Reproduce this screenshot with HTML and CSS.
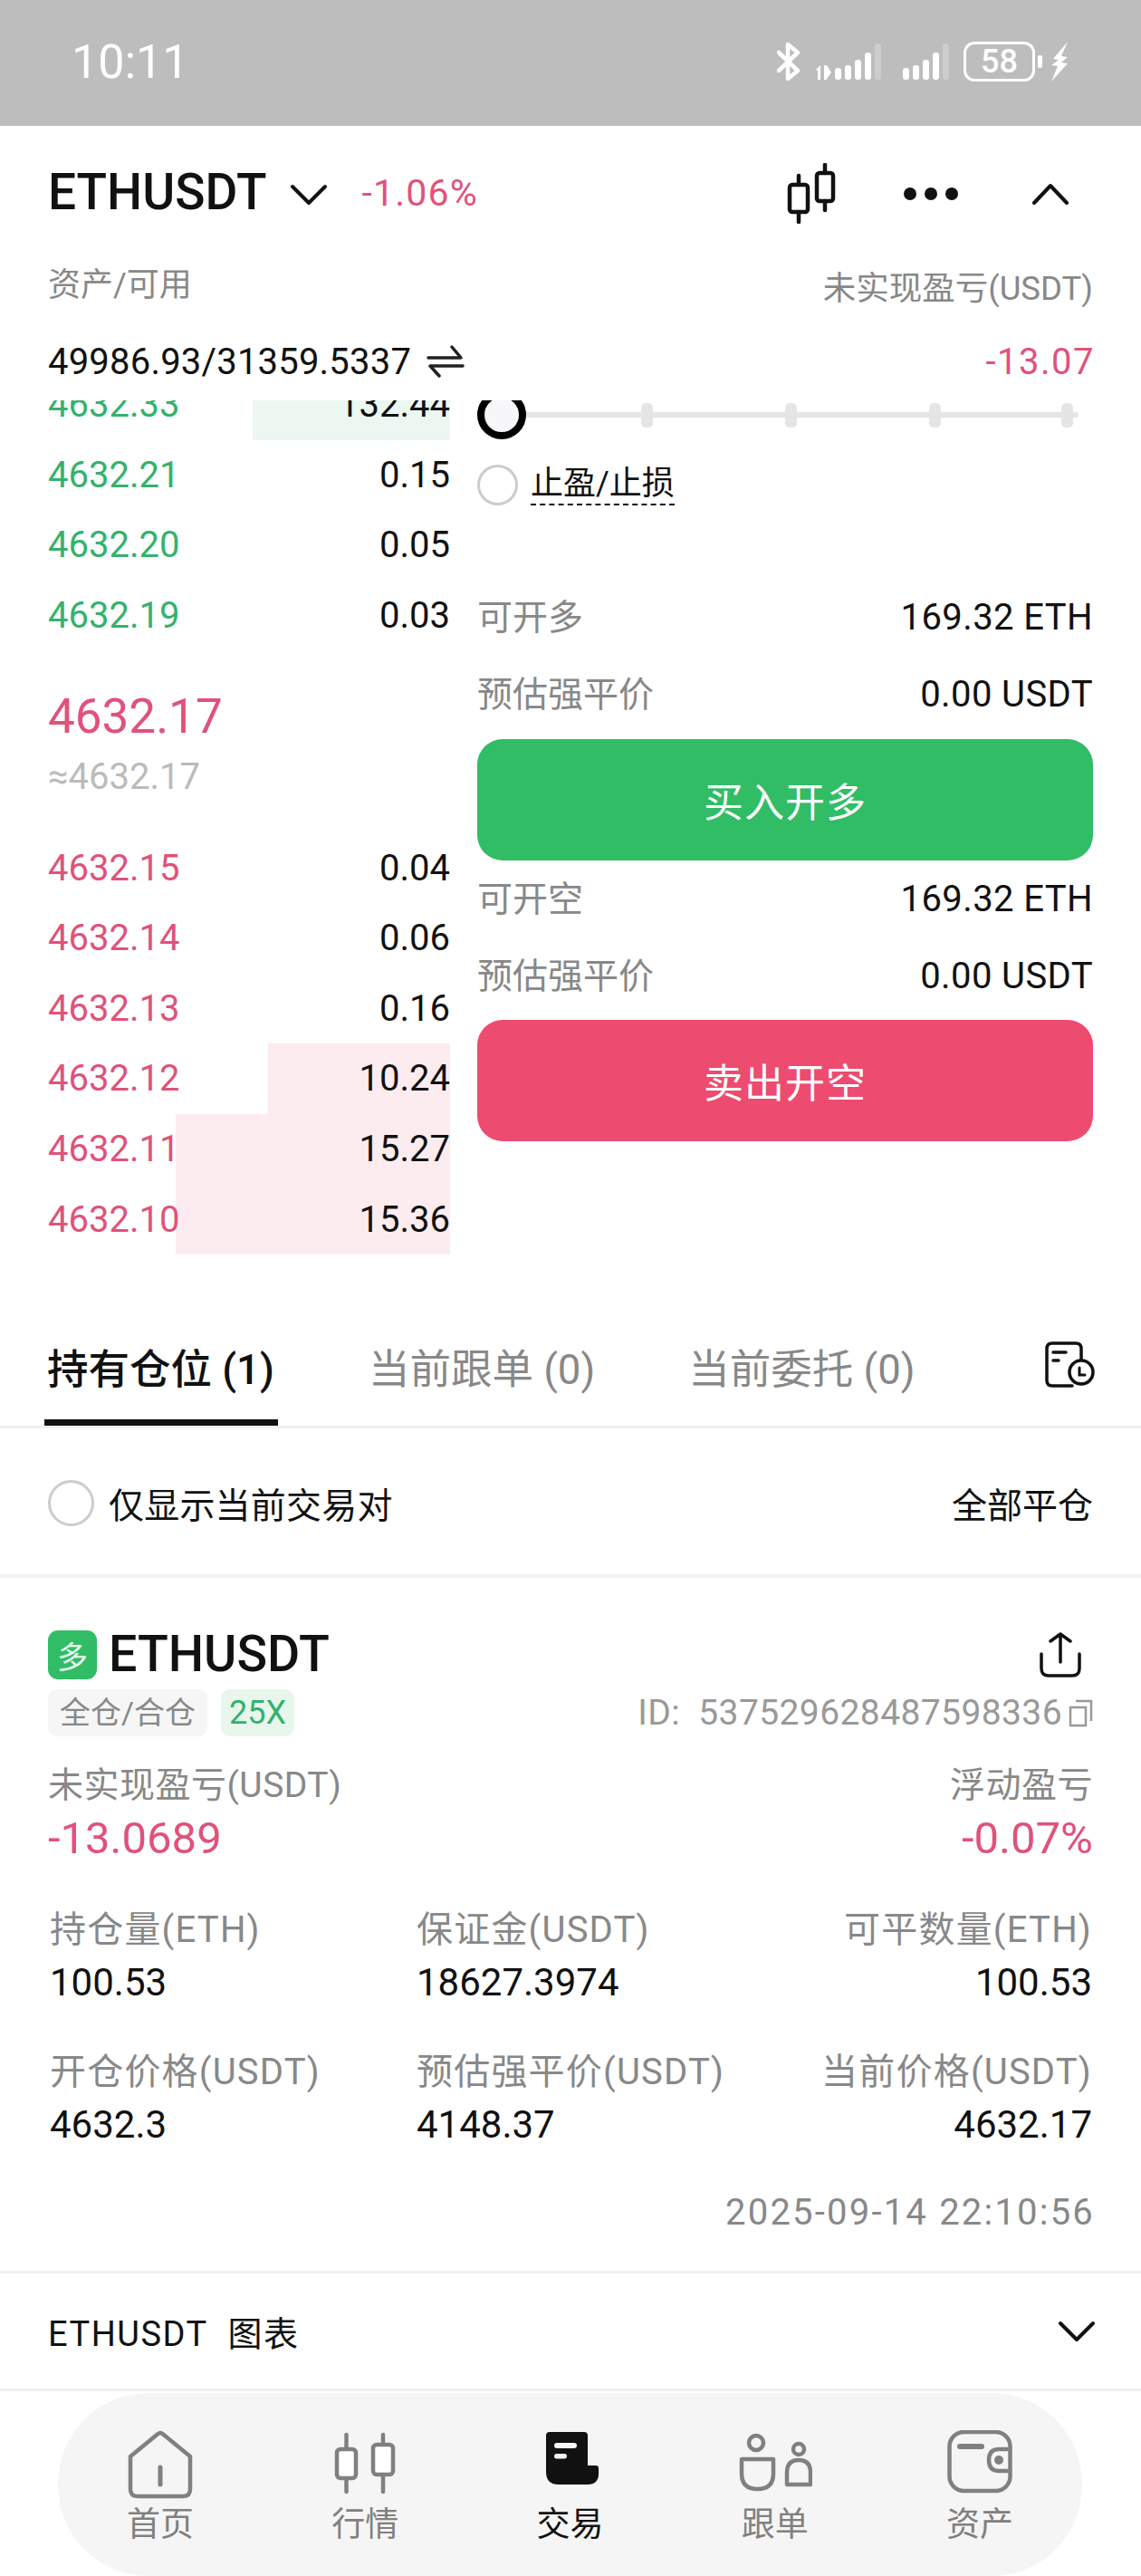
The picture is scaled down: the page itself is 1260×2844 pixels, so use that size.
FILE: index.html
```html
<!DOCTYPE html>
<html lang="zh">
<head>
<meta charset="utf-8">
<title>ETHUSDT</title>
<link rel="stylesheet" href="styles.css">
</head>
<body>
<div class="page">
  <div class="status">
    <span class="clock">10:11</span>
    <div class="status-icons">
      <svg class="ic-bt" viewBox="0 0 26 42"><path d="M2 11 L23 31 L12 40 V2 L23 11 L2 31" fill="none" stroke="#fff" stroke-width="4.500" stroke-linejoin="round" stroke-linecap="round"/></svg>
      <svg class="ic-sig1" viewBox="0 0 73 42"><g fill="#fff"><path d="M1 30 L6 25 V41 H3 V31 Z"/><path d="M10 25 H13 L18 33 L13 40 V41 H10 Z"/><rect x="22" y="28" width="7" height="13" rx="3"/><rect x="33" y="25" width="7" height="16" rx="3"/><rect x="44" y="19" width="7" height="22" rx="3"/><rect x="55" y="11" width="7" height="30" rx="3"/></g><rect x="66" y="1" width="7" height="40" rx="3" fill="#fff" opacity=".25"/></svg>
      <svg class="ic-sig2" viewBox="0 0 51 42"><g fill="#fff"><rect x="0" y="28" width="7" height="13" rx="3"/><rect x="11" y="25" width="7" height="16" rx="3"/><rect x="22" y="19" width="7" height="22" rx="3"/><rect x="33" y="11" width="7" height="30" rx="3"/></g><rect x="44" y="1" width="7" height="40" rx="3" fill="#fff" opacity=".25"/></svg>
      <div class="battery"><span>58</span></div>
      <i class="bat-tip"></i>
      <svg class="ic-bolt" viewBox="0 0 20 44"><path d="M19 0 L3 19 L9 20 L1 26 L8 27 L1 44 L19 24 L12 23 L19 17 L12 16 Z" fill="#fff"/></svg>
    </div>
  </div>

  <header class="head">
    <h1 class="pair">ETHUSDT</h1>
    <svg class="chev" viewBox="0 0 40 24"><path d="M2 3 L20 21 L38 3" fill="none" stroke="#111" stroke-width="4" stroke-linecap="round" stroke-linejoin="round"/></svg>
    <span class="change">-1.06%</span>
    <div class="head-tools">
      <svg class="ic-candle" viewBox="0 0 54 67"><g fill="none" stroke="#111" stroke-width="4.500" stroke-linecap="round" stroke-linejoin="round"><rect x="3" y="24" width="20" height="30" rx="3"/><path d="M13 14 V24 M13 54 V65"/><rect x="33" y="11" width="18" height="31" rx="3"/><path d="M42 2 V11 M42 42 V52"/></g></svg>
      <div class="dots"><i></i><i></i><i></i></div>
      <svg class="ic-up" viewBox="0 0 40 24"><path d="M2 22 L20 3 L38 22" fill="none" stroke="#111" stroke-width="4" stroke-linecap="round" stroke-linejoin="round"/></svg>
    </div>
  </header>

  <div class="assets">
    <div class="asset-labels"><span class="lbl-a">资产/可用</span><span class="lbl-b">未实现盈亏(USDT)</span></div>
    <div class="asset-vals">
      <span class="bal">49986.93/31359.5337</span>
      <svg class="ic-swap" viewBox="0 0 42 36"><path d="M2 14 H38 L28 2 M40 23 H4 L14 34" fill="none" stroke="#222" stroke-width="3.500" stroke-linecap="round" stroke-linejoin="round"/></svg>
      <span class="upl">-13.07</span>
    </div>
  </div>

  <section class="trade">
    <div class="book">
      <div class="book-scroll">
        <div class="row buy"><span class="fill w-buy"></span><span class="p">4632.33</span><span class="q">132.44</span></div>
        <div class="row buy"><span class="p">4632.21</span><span class="q">0.15</span></div>
        <div class="row buy"><span class="p">4632.20</span><span class="q">0.05</span></div>
        <div class="row buy"><span class="p">4632.19</span><span class="q">0.03</span></div>
        <div class="mid">
          <div class="mid-price">4632.17</div>
          <div class="mid-ref">≈4632.17</div>
        </div>
        <div class="row sell"><span class="p">4632.15</span><span class="q">0.04</span></div>
        <div class="row sell"><span class="p">4632.14</span><span class="q">0.06</span></div>
        <div class="row sell"><span class="p">4632.13</span><span class="q">0.16</span></div>
        <div class="row sell"><span class="fill w1"></span><span class="p">4632.12</span><span class="q">10.24</span></div>
        <div class="row sell"><span class="fill w2"></span><span class="p">4632.11</span><span class="q">15.27</span></div>
        <div class="row sell"><span class="fill w2"></span><span class="p">4632.10</span><span class="q">15.36</span></div>
      </div>
    </div>
    <div class="form">
      <div class="slider">
        <span class="thumb"></span><span class="tick t1"></span><span class="tick t2"></span><span class="tick t3"></span><span class="tick t4"></span>
      </div>
      <div class="tpsl"><span class="radio small"></span><span class="tpsl-text">止盈/止损</span></div>
      <div class="kv first"><span>可开多</span><b>169.32 ETH</b></div>
      <div class="kv"><span>预估强平价</span><b>0.00 USDT</b></div>
      <button class="btn long">买入开多</button>
      <div class="kv after-btn"><span>可开空</span><b>169.32 ETH</b></div>
      <div class="kv"><span>预估强平价</span><b>0.00 USDT</b></div>
      <button class="btn short">卖出开空</button>
    </div>
  </section>

  <nav class="tabs">
    <span class="tab active">持有仓位 (1)</span>
    <span class="tab t-two">当前跟单 (0)</span>
    <span class="tab t-three">当前委托 (0)</span>
    <svg class="ic-hist" viewBox="0 0 56 51"><path d="M31 49 H9 Q3 49 3 43 V8 Q3 2 9 2 H35 Q41 2 41 8 V20" fill="none" stroke="#111" stroke-width="3.500" stroke-linecap="round"/><path d="M10 12 H24 M10 21 H16" stroke="#111" stroke-width="3.500" stroke-linecap="round"/><circle cx="41" cy="34" r="13" fill="#fff" stroke="#111" stroke-width="3.500"/><path d="M39 29 V37 H45" fill="none" stroke="#111" stroke-width="3" stroke-linecap="round"/></svg>
  </nav>

  <div class="filter">
    <span class="radio"></span>
    <span class="filter-text">仅显示当前交易对</span>
    <span class="close-all">全部平仓</span>
  </div>

  <article class="card">
    <div class="card-top">
      <div class="card-title"><span class="side">多</span><span class="card-pair">ETHUSDT</span></div>
      <svg class="ic-share" viewBox="0 0 46 50"><path d="M2 24 V40 Q2 48 10 48 H36 Q44 48 44 40 V24 M23 33 V2 M12 10 L23 2 L34 10" fill="none" stroke="#111" stroke-width="3.500" stroke-linecap="round" stroke-linejoin="round"/></svg>
    </div>
    <div class="card-tags">
      <span class="tag">全仓/合仓</span>
      <span class="tag lev">25X</span>
      <span class="order-id">ID:&nbsp;&nbsp;537529628487598336</span>
      <svg class="ic-copy" viewBox="0 0 28 31"><path d="M9 2 H26 V24 M3 9 H20 V29 H3 Z" fill="none" stroke="#999" stroke-width="2.500"/></svg>
    </div>
    <div class="pnl">
      <div class="cell"><span class="k">未实现盈亏(USDT)</span><span class="v-red">-13.0689</span></div>
      <div class="cell right"><span class="k">浮动盈亏</span><span class="v-red">-0.07%</span></div>
    </div>
    <div class="grid">
      <div class="cell"><span class="k">持仓量(ETH)</span><span class="v">100.53</span></div>
      <div class="cell"><span class="k">保证金(USDT)</span><span class="v">18627.3974</span></div>
      <div class="cell right"><span class="k">可平数量(ETH)</span><span class="v">100.53</span></div>
      <div class="cell"><span class="k">开仓价格(USDT)</span><span class="v">4632.3</span></div>
      <div class="cell"><span class="k">预估强平价(USDT)</span><span class="v">4148.37</span></div>
      <div class="cell right"><span class="k">当前价格(USDT)</span><span class="v">4632.17</span></div>
    </div>
    <div class="stamp">2025-09-14 22:10:56</div>
  </article>

  <div class="chart-row">
    <span>ETHUSDT&nbsp;&nbsp;图表</span>
    <svg class="chev-sm" viewBox="0 0 40 24"><path d="M2 3 L20 21 L38 3" fill="none" stroke="#111" stroke-width="4" stroke-linecap="round" stroke-linejoin="round"/></svg>
  </div>

  <footer class="nav">
    <a class="nav-item">
      <svg viewBox="0 0 72 76"><path d="M3 29 L33.500 4 Q36 2 38.500 4 L69 29 V65 Q69 73 61 73 H11 Q3 73 3 65 Z" fill="none" stroke="#808080" stroke-width="4.500" stroke-linejoin="round"/><path d="M36 41 V60" stroke="#808080" stroke-width="5" stroke-linecap="round"/></svg>
      <span>首页</span>
    </a>
    <a class="nav-item">
      <svg viewBox="0 0 72 76"><g fill="#fff" stroke="#808080" stroke-width="4.500" stroke-linecap="round" stroke-linejoin="round"><rect x="5" y="21" width="21" height="32" rx="4"/><path d="M15.500 5 V21 M15.500 53 V68"/><rect x="45" y="16" width="22" height="33" rx="4"/><path d="M56 5 V16 M56 49 V68"/></g></svg>
      <span>行情</span>
    </a>
    <a class="nav-item on">
      <svg viewBox="0 0 72 76"><path d="M14 2 H52 Q56 2 56 6 V39 H65 Q68 39 68 42 V48 Q68 60 56 60 H24 Q10 60 10 46 V6 Q10 2 14 2 Z" fill="#111"/><rect x="19" y="14" width="25" height="6" rx="3" fill="#f5f5f5"/><rect x="19" y="26" width="14" height="5.500" rx="2.700" fill="#f5f5f5"/></svg>
      <span>交易</span>
    </a>
    <a class="nav-item">
      <svg viewBox="0 0 82 76"><g fill="none" stroke="#808080" stroke-width="4.500" stroke-linecap="round" stroke-linejoin="round"><circle cx="20" cy="14" r="8"/><path d="M4 32 H39 V48 Q39 65 21.500 65 Q4 65 4 48 Z"/><circle cx="67" cy="21" r="6"/><path d="M54 60 V47 Q54 33 67 33 Q80 33 80 47 V60 Z"/></g></svg>
      <span>跟单</span>
    </a>
    <a class="nav-item">
      <svg viewBox="0 0 72 76"><rect x="2.500" y="2" width="67" height="65" rx="16" fill="none" stroke="#808080" stroke-width="4.500"/><path d="M14 18 H38" stroke="#808080" stroke-width="6" stroke-linecap="round"/><path d="M69 21 H57 Q46 21 46 33 Q46 45 57 45 H69" fill="none" stroke="#808080" stroke-width="4.500"/><circle cx="57" cy="33" r="5" fill="#808080"/></svg>
      <span>资产</span>
    </a>
  </footer>
</div>
</body>
</html>
```
FILE: styles.css
```css
* { box-sizing: border-box; }
html, body { margin: 0; padding: 0; background: #fff; }
body { font-family: Roboto, "Noto Sans CJK SC", sans-serif; color: #111; }
.page { width: 1260px; height: 2844px; overflow: hidden; }

/* status bar */
.status { height: 139px; background: #bdbdbd; display: flex; align-items: center; justify-content: space-between; padding: 0 80px 0 79px; color: #fff; }
.clock { font-size: 52px; line-height: 1; font-weight: 400; margin-top: -2px; }
.status-icons { display: flex; align-items: center; margin-top: -3px; }
.ic-bt { width: 26px; height: 42px; margin-right: 16px; }
.ic-sig1 { width: 73px; height: 42px; margin-right: 24px; }
.ic-sig2 { width: 51px; height: 42px; margin-right: 16px; }
.battery { width: 79px; height: 44px; border: 3.500px solid #fff; border-radius: 12px; display: flex; align-items: center; justify-content: center; font-size: 36px; line-height: 1; font-weight: 500; }
.bat-tip { width: 5px; height: 14px; background: #fff; border-radius: 2px; margin: 0 9px 0 3px; }
.ic-bolt { width: 20px; height: 44px; }

/* header */
.head { height: 145px; display: flex; align-items: center; padding: 2px 0 0 53px; }
.pair { margin: 0; font-size: 55px; font-weight: 500; line-height: 1; letter-spacing: 0; }
.chev { width: 40px; height: 24px; margin-left: 26px; margin-top: 4px; }
.change { font-size: 41px; letter-spacing: 1.200px; color: #e0527a; margin-left: 39px; }
.head-tools { margin-left: auto; display: flex; align-items: center; margin-top: 2px; }
.ic-candle { width: 54px; height: 67px; margin-right: 75px; }
.dots { display: flex; gap: 9px; margin-right: 82px; }
.dots i { width: 14px; height: 14px; border-radius: 50%; background: #111; }
.ic-up { width: 40px; height: 24px; margin-right: 80px; }

/* assets */
.assets { padding: 0 53px; }
.asset-labels { display: flex; justify-content: space-between; height: 78px; color: #888; font-size: 36px; }
.lbl-a { line-height: 62px; }
.lbl-b { line-height: 70px; font-size: 36.500px; }
.asset-vals { display: flex; align-items: center; height: 80px; padding-bottom: 6px; font-size: 40px; }
.bal { letter-spacing: .2px; }
.ic-swap { width: 42px; height: 36px; margin-left: 17px; }
.upl { margin-left: auto; margin-right: -2px; color: #e0527a; font-size: 40px; letter-spacing: 1.500px; }

/* trade */
.trade { display: flex; height: 998px; overflow: hidden; }
.book { width: 444px; margin-left: 53px; overflow: hidden; }
.book-scroll { margin-top: -34px; }
.row { position: relative; height: 77.600px; display: flex; align-items: center; justify-content: space-between; font-size: 40px; }
.row span.p, .row span.q { position: relative; }
.buy .p { color: #33b26c; }
.sell .p { color: #e0527a; }
.fill { position: absolute; right: 0; top: 0; bottom: 0; }
.w-buy { width: 218px; background: #ebf7f0; }
.w1 { width: 201px; background: #fdecef; }
.w2 { width: 303px; background: #fdecef; }
.mid { height: 201px; padding-top: 40px; }
.mid-price { font-size: 53px; line-height: 66px; color: #e0527a; }
.mid-ref { font-size: 40px; line-height: 50px; color: #bbb; margin-top: 9px; }

.form { width: 680px; margin-left: 30px; }
.slider { position: relative; height: 6px; margin-top: 13px; width: 664px; background: #e5e5e5; border-radius: 3px; }
.thumb { position: absolute; left: 0; top: -24px; width: 54px; height: 54px; border-radius: 50%; border: 8px solid #000; background: #f7f7fa; }
.tick { position: absolute; top: -10px; width: 13px; height: 27px; border-radius: 5px; background: #e5e5e5; }
.t1 { left: 181px; } .t2 { left: 340px; } .t3 { left: 499px; } .t4 { left: 645px; }
.tpsl { display: flex; align-items: center; margin-top: 51px; }
.radio { display: block; flex: none; width: 51px; height: 51px; border-radius: 50%; border: 3px solid #ccc; }
.radio.small { width: 45px; height: 45px; }
.tpsl-text { font-size: 36px; line-height: 44px; margin-left: 14px; border-bottom: 2px dashed #111; }
.kv { display: flex; justify-content: space-between; align-items: center; height: 85px; padding-top: 5px; font-size: 39px; }
.kv span { color: #888; line-height: 50px; }
.kv b { font-weight: 400; color: #111; font-size: 40px; line-height: 50px; letter-spacing: .4px; }
.kv.first { margin-top: 79px; }
.kv.after-btn { margin-top: -2px; }
.btn { display: block; width: 100%; height: 134px; border: 0; border-radius: 28px; color: #fff; font: 400 44px Roboto, "Noto Sans CJK SC", sans-serif; letter-spacing: 1px; }
.long { background: #31bd65; margin-top: 9px; }
.short { background: #ee4b70; margin-top: 8px; }

/* tabs */
.tabs { height: 137px; display: flex; align-items: stretch; border-bottom: 3px solid #f0f0f0; padding: 0 51px 0 53px; font-size: 45.500px; color: #888; }
.tab { height: 134px; padding-top: 47px; line-height: 52px; white-space: nowrap; }
.tab.active { color: #111; font-weight: 500; width: 258px; margin-left: -4px; padding-left: 3px; border-bottom: 7px solid #111; }
.t-two { margin-left: 100px; }
.t-three { margin-left: 103px; }
.ic-hist { width: 56px; height: 51px; margin-left: auto; margin-top: 41px; }

/* filter */
.filter { height: 165px; display: flex; align-items: center; padding: 3px 53px 0; border-bottom: 4px solid #f2f2f2; font-size: 39px; }
.filter-text { margin-left: 16px; letter-spacing: .2px; }
.close-all { margin-left: auto; }

/* card */
.card { padding: 58px 53px 0; height: 768px; border-bottom: 3px solid #f0f0f0; }
.card-top { display: flex; justify-content: space-between; align-items: center; height: 54px; }
.card-title { display: flex; align-items: center; }
.side { width: 54px; height: 54px; background: #31bd65; color: #e8fff0; border-radius: 11px; font-size: 34px; display: flex; align-items: center; justify-content: center; }
.card-pair { font-size: 55.500px; font-weight: 500; margin-left: 13px; line-height: 1; }
.ic-share { width: 46px; height: 50px; margin-right: 13px; }
.card-tags { display: flex; align-items: center; margin-top: 11px; height: 52px; }
.tag { height: 52px; line-height: 52px; padding: 0 13px; border-radius: 10px; background: #f6f6f6; color: #888; font-size: 34px; white-space: nowrap; }
.lev { background: #e9f6ee; color: #33b26c; margin-left: 15px; font-size: 36px; width: 81px; padding: 0; text-align: center; }
.order-id { margin-left: auto; color: #999; font-size: 39px; letter-spacing: .4px; }
.ic-copy { width: 28px; height: 31px; margin-left: 6px; }
.cell { display: flex; flex-direction: column; }
.right { align-items: flex-end; }
.k { font-size: 40px; letter-spacing: 1.200px; line-height: 50px; color: #888; white-space: nowrap; }
.v { font-size: 42px; line-height: 50px; color: #111; margin-top: 8px; }
.v-red { font-size: 49px; line-height: 58px; color: #e0527a; margin-top: 5px; }
.pnl { display: flex; justify-content: space-between; margin-top: 29px; }
.pnl .k { font-size: 39px; letter-spacing: .5px; }
.grid { display: grid; grid-template-columns: 405px 1fr 1fr; row-gap: 49px; margin-top: 47px; padding-left: 2px; padding-right: 1px; }
.stamp { text-align: right; font-size: 40px; letter-spacing: 2.200px; color: #888; margin: 47px -2px 0 0; line-height: 50px; }

.chart-row { height: 130px; display: flex; align-items: center; justify-content: space-between; padding: 0 51px 0 53px; border-bottom: 3px solid #f0f0f0; font-size: 38px; letter-spacing: 1.500px; }
.chev-sm { width: 40px; height: 24px; }

/* nav */
.nav { margin: 2px 65px 0 64px; height: 202px; background: #f5f5f5; border-radius: 100px; display: grid; grid-template-columns: repeat(5, 1fr); }
.nav-item { display: flex; flex-direction: column; align-items: center; padding-top: 41px; color: #808080; font-size: 37px; }
.nav-item svg { height: 76px; width: 82px; }
.nav-item span { line-height: 44px; margin-top: 7px; }
.nav-item.on { color: #111; }
```
